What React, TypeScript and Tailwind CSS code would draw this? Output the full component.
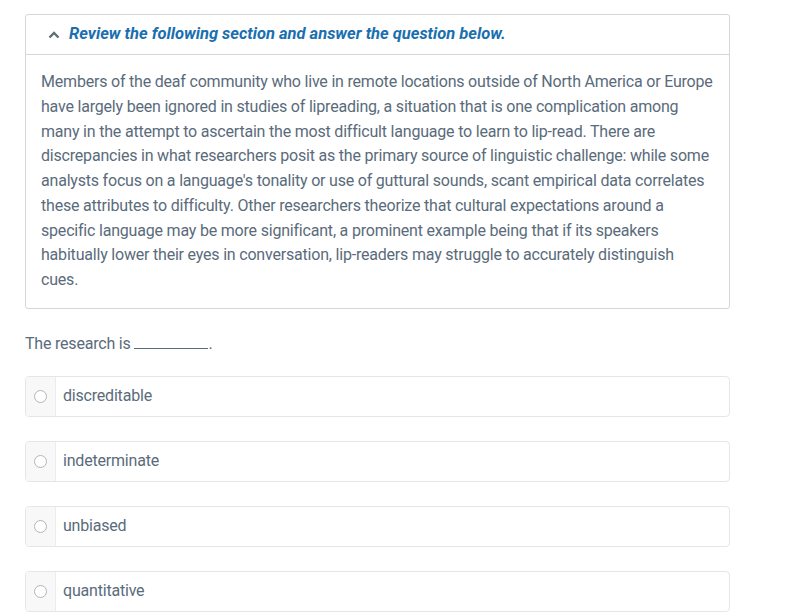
import React from "react";

const options = ["discreditable", "indeterminate", "unbiased", "quantitative"];

export default function App() {
  return (
    <div className="min-h-[616px] w-[802px] bg-white pt-[14px] pl-[25px] text-[#5a6b7b] tracking-[-0.2px]" style={{ fontFamily: "Roboto, 'Open Sans', sans-serif" }}>
      <div className="w-[705px] rounded-[3px] border border-[#d6d6d6]">
        <div className="flex h-[40px] items-center border-b border-[#d6d6d6] pl-[22px]">
          <svg width="12" height="8" viewBox="0 0 12 8" className="mr-[9px]">
            <path d="M1.5 6.5 L6 2 L10.5 6.5" fill="none" stroke="#5f6f72" strokeWidth="2.4" />
          </svg>
          <span className="text-[16.5px] font-bold italic text-[#1a6fb0] tracking-normal">Review the following section and answer the question below.</span>
        </div>
        <p className="px-[15px] pt-[15px] pb-[15px] text-[16px] leading-[24.75px]">
          Members of the deaf community who live in remote locations outside of North America or Europe have largely been ignored in studies of lipreading, a situation that is one complication among many in the attempt to ascertain the most difficult language to learn to lip-read. There are discrepancies in what researchers posit as the primary source of linguistic challenge: while some analysts focus on a language's tonality or use of guttural sounds, scant empirical data correlates these attributes to difficulty. Other researchers theorize that cultural expectations around a specific language may be more significant, a prominent example being that if its speakers habitually lower their eyes in conversation, lip-readers may struggle to accurately distinguish cues.
        </p>
      </div>
      <p className="mt-[23px] text-[16px] leading-[24px]">
        The research is <span className="inline-block h-[14px] w-[74px] border-b border-[#5a6b7b] align-baseline" />.
      </p>
      <div className="mt-[20px] flex w-[705px] flex-col gap-[24px]">
        {options.map((o) => (
          <div key={o} className="flex h-[41px] overflow-hidden rounded-[4px] border border-[#e6e6e6]">
            <div className="flex w-[30px] items-center justify-center border-r border-[#ececec] bg-[#f8f8f8]">
              <span className="h-[13px] w-[13px] rounded-full border border-[#b5b5b5] bg-white" />
            </div>
            <div className="flex items-center pl-[7px] text-[16px]">{o}</div>
          </div>
        ))}
      </div>
    </div>
  );
}
